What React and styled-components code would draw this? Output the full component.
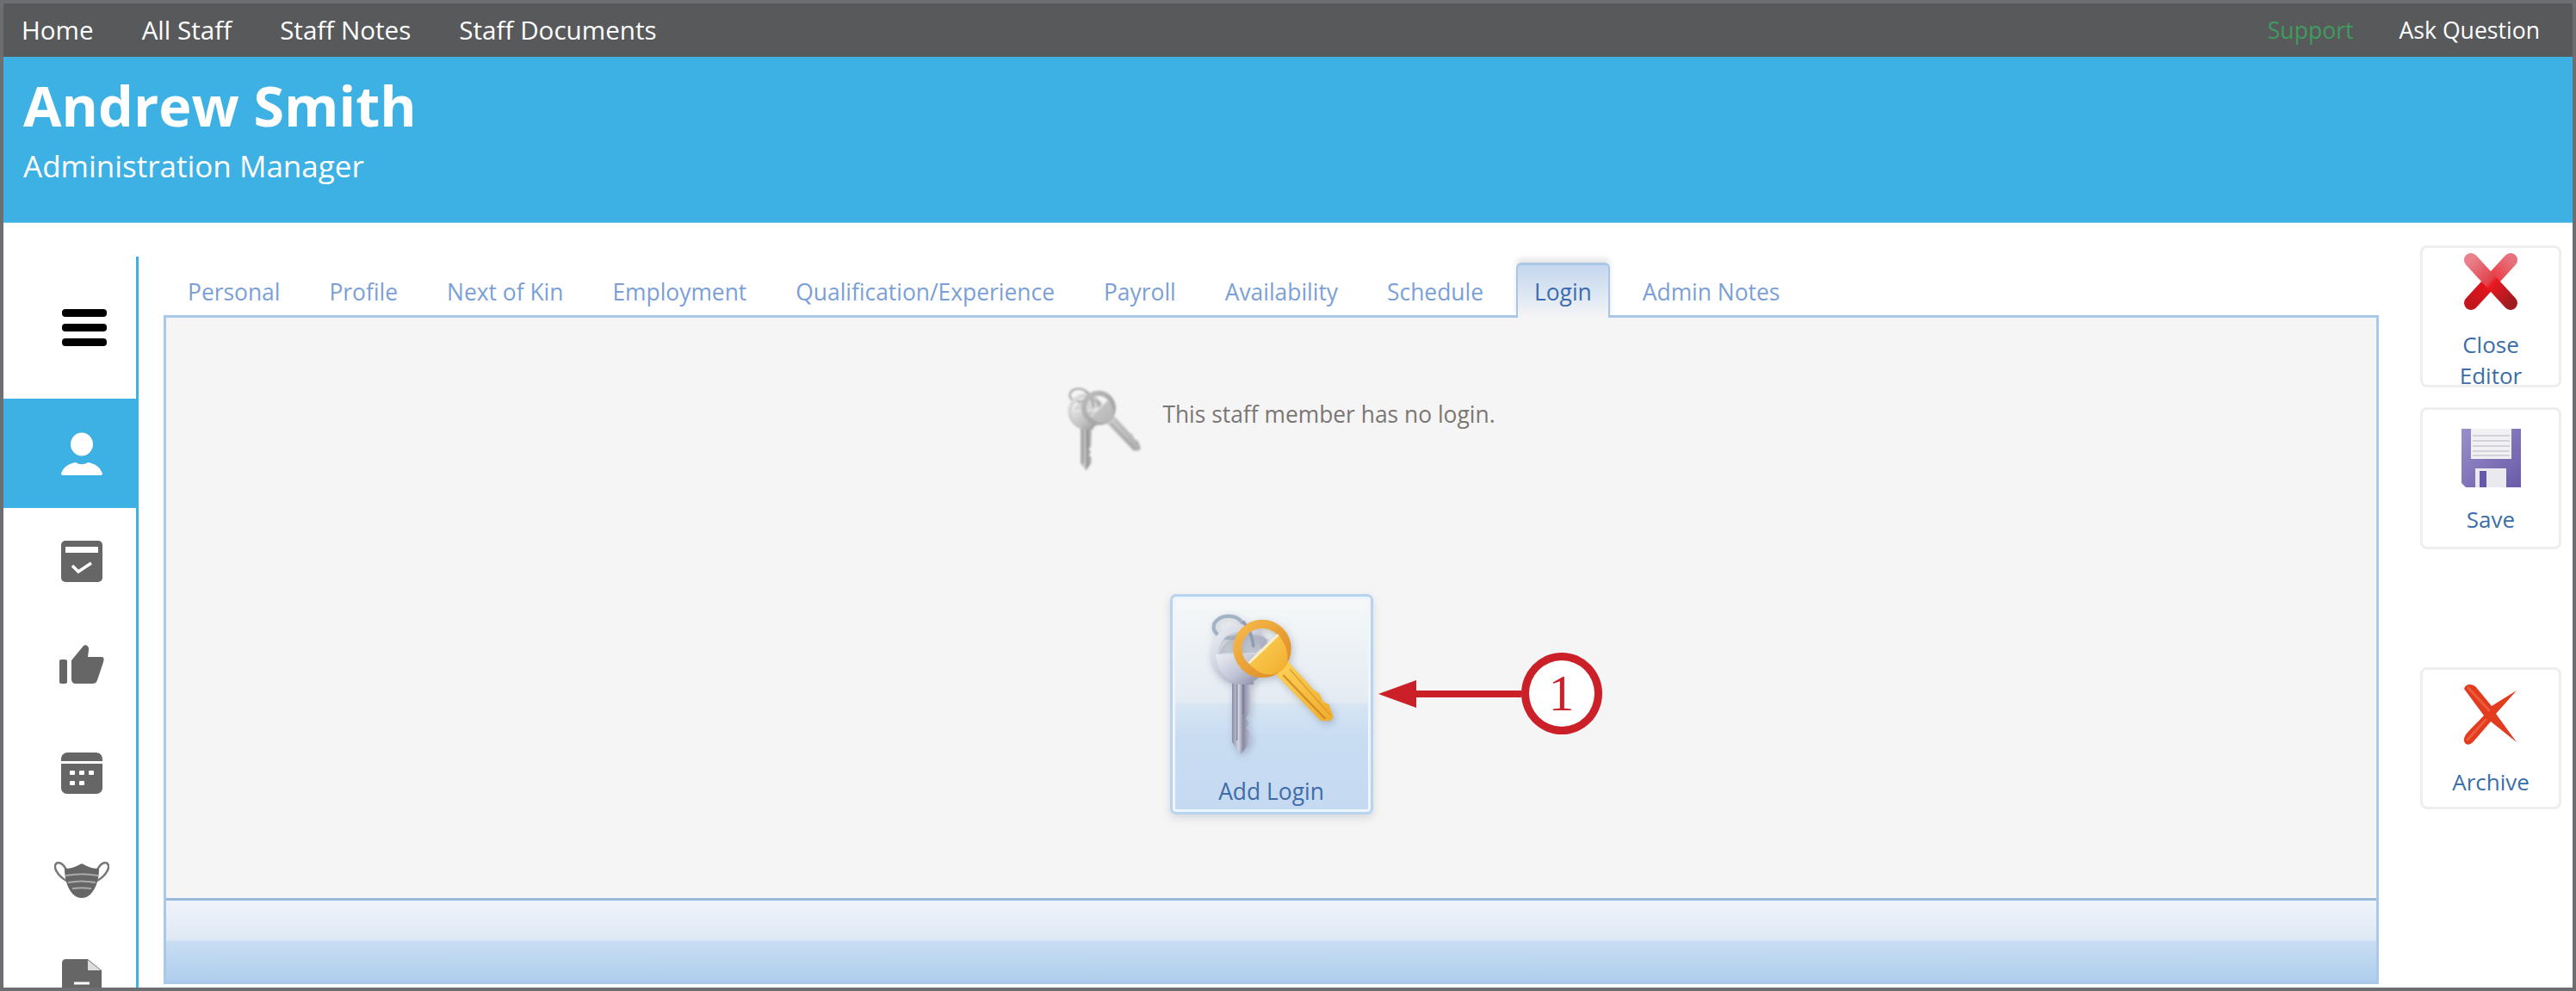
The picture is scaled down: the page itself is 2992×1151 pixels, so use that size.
import styled, { createGlobalStyle } from 'styled-components'

const FONT = `'Open Sans', 'Noto Sans', 'Liberation Sans', sans-serif`

const GlobalStyle = createGlobalStyle`
  html, body {
    margin: 0;
    background: #fff;
    overflow: hidden;
  }
  body {
    font-family: ${FONT};
  }
`

const tabs = [
  'Personal',
  'Profile',
  'Next of Kin',
  'Employment',
  'Qualification/Experience',
  'Payroll',
  'Availability',
  'Schedule',
  'Login',
  'Admin Notes',
]

const GlossyCross = () => (
  <svg width='64' height='68' viewBox='0 0 64 68'>
    <defs>
      <linearGradient id='crossA' x1='0' y1='0' x2='1' y2='1'>
        <stop offset='0' stopColor='#e9808a' />
        <stop offset='0.48' stopColor='#e2424b' />
        <stop offset='0.55' stopColor='#ea1820' />
        <stop offset='1' stopColor='#a01b20' />
      </linearGradient>
      <linearGradient id='crossB' x1='1' y1='0' x2='0' y2='1'>
        <stop offset='0' stopColor='#e5727c' />
        <stop offset='0.45' stopColor='#ec3a42' />
        <stop offset='0.6' stopColor='#e5141c' />
        <stop offset='1' stopColor='#c2161c' />
      </linearGradient>
    </defs>
    <path d='M9 59 L55 9' stroke='url(#crossB)' strokeWidth='16' strokeLinecap='round' />
    <path d='M9 9 L55 59' stroke='url(#crossA)' strokeWidth='16' strokeLinecap='round' />
  </svg>
)

const ThinCross = () => (
  <svg width='64' height='72' viewBox='0 0 64 72'>
    <path d='M1 6 C3 0 9 0 14 3 L33 26 L62 8 L38 35 L62 68 L32 44 L13 66 C8 73 0 72 1 64 C2 58 10 52 24 37 Z' fill='#e23b1d' />
    <path d='M6 5 L30 31 M5 65 L26 42' stroke='#f0694a' strokeWidth='3' strokeLinecap='round' opacity='0.7' />
  </svg>
)

const Floppy = () => (
  <svg width='69' height='70' viewBox='0 0 69 70'>
    <defs>
      <linearGradient id='floppy' x1='0' y1='0' x2='1' y2='1'>
        <stop offset='0' stopColor='#9a8fcb' />
        <stop offset='1' stopColor='#6a5aa8' />
      </linearGradient>
    </defs>
    <path d='M0 1 H69 V69 H5 L0 64 Z' fill='url(#floppy)' />
    <rect x='11' y='1' width='47' height='35' fill='#f1f1f3' />
    <path d='M13 9 H56 M13 15 H56 M13 21 H56 M13 27 H56 M13 32 H56' stroke='#c9c9d3' strokeWidth='1.5' />
    <rect x='16' y='47' width='36' height='22' fill='#e9e9ee' />
    <rect x='21' y='50' width='8' height='19' fill='#6558a6' />
  </svg>
)

const Keys = () => (
  <svg width='100%' height='100%' viewBox='210 90 450 510'>
    <defs>
      <linearGradient id='silverHead' x1='0' y1='0' x2='1' y2='1'>
        <stop offset='0' stopColor='#eceef3' />
        <stop offset='0.6' stopColor='#bfc2d4' />
        <stop offset='1' stopColor='#8f90a8' />
      </linearGradient>
      <linearGradient id='silverStem' x1='0' y1='0' x2='1' y2='0'>
        <stop offset='0' stopColor='#8a8ca6' />
        <stop offset='0.35' stopColor='#d4d6e2' />
        <stop offset='0.6' stopColor='#8688a2' />
        <stop offset='1' stopColor='#c3c5d6' />
      </linearGradient>
      <linearGradient id='goldRing' x1='0' y1='0' x2='1' y2='1'>
        <stop offset='0' stopColor='#f6b94a' />
        <stop offset='1' stopColor='#de8a24' />
      </linearGradient>
      <linearGradient id='goldBlade' x1='0' y1='0' x2='1' y2='1'>
        <stop offset='0' stopColor='#fcd45c' />
        <stop offset='1' stopColor='#f0ac2c' />
      </linearGradient>
    </defs>
    <ellipse cx='285' cy='145' rx='52' ry='38' fill='none' stroke='#a3b3c6' strokeWidth='13' />
    <path d='M297 325 L297 545 L328 588 L360 545 L360 510 L345 497 L358 480 L345 462 L358 445 L362 345 Z' fill='url(#silverStem)' />
    <path d='M314 340 V540 M336 340 V450' stroke='#74768f' strokeWidth='5' opacity='0.7' />
    <ellipse cx='325' cy='240' rx='90' ry='92' fill='none' stroke='url(#silverHead)' strokeWidth='26' />
    <path d='M240 240 C250 325 310 352 372 345 L378 240 Z' fill='url(#silverHead)' />
    <path d='M320 175 C345 165 385 165 425 190 L380 235 H255 C262 205 290 185 320 175 Z' fill='#8b93a6' opacity='0.35' />
    <path d='M335 125 C358 150 368 175 372 215' fill='none' stroke='#8f9db2' strokeWidth='11' />
    <path d='M445 306 L490 262 L515 290 L560 338 L580 362 L600 375 L615 405 L635 415 L650 458 L640 472 L606 472 Z' fill='url(#goldBlade)' />
    <path d='M475 312 L622 465' stroke='#c9821f' strokeWidth='7' opacity='0.8' />
    <path d='M498 292 L640 452' stroke='#d9952a' strokeWidth='5' opacity='0.7' />
    <circle cx='402' cy='220' r='86' fill='none' stroke='url(#goldRing)' strokeWidth='30' />
    <path d='M356 270 L458 172 C486 205 500 250 484 282 C450 322 396 322 356 270 Z' fill='url(#goldBlade)' />
    <path d='M356 270 L458 172' stroke='#fff2c8' strokeWidth='8' />
  </svg>
)

const PersonIcon = () => (
  <svg width='48' height='50' viewBox='0 0 48 50' fill='#fff'>
    <ellipse cx='24' cy='14' rx='13' ry='13.5' />
    <path d='M0 48 C3 39 11 36 17 35 C21 38 27 38 31 35 C37 36 45 39 48 48 C48 50 46 50 44 50 H4 C2 50 0 50 0 48 Z' />
  </svg>
)

const CheckCalendarIcon = () => (
  <svg width='48' height='48' viewBox='0 0 48 48'>
    <rect width='48' height='48' rx='5' fill='#666' />
    <rect x='5' y='7' width='38' height='7' fill='#fff' />
    <path d='M13 29 L20 36 L35 26' fill='none' stroke='#fff' strokeWidth='3.5' />
  </svg>
)

const ThumbIcon = () => (
  <svg width='52' height='46' viewBox='0 0 52 46' fill='#666'>
    <rect y='17' width='9' height='28' rx='2' />
    <path d='M14 18 L28 1 C31 -1 35 2 34 6 L33 14 H49 C52 14 52 17 51 20 L44 41 C43 44 41 45 38 45 H19 C16 45 14 43 14 40 Z' />
  </svg>
)

const CalendarIcon = () => (
  <svg width='48' height='48' viewBox='0 0 48 48'>
    <path d='M0 8 C0 3 3 0 8 0 H40 C45 0 48 3 48 8 V10 H0 Z M0 13 H48 V41 C48 45 45 48 41 48 H7 C3 48 0 45 0 41 Z' fill='#666' />
    <g fill='#fff'>
      <rect x='10' y='21' width='6' height='5' rx='1' />
      <rect x='21' y='21' width='6' height='5' rx='1' />
      <rect x='32' y='21' width='6' height='5' rx='1' />
      <rect x='10' y='33' width='6' height='5' rx='1' />
      <rect x='21' y='33' width='6' height='5' rx='1' />
    </g>
  </svg>
)

const MaskIcon = () => (
  <svg width='64' height='44' viewBox='0 0 64 44'>
    <path d='M14 11 C9 2 3 1 1 6 C0 12 7 20 14 24 M50 11 C55 2 61 1 63 6 C64 12 57 20 50 24' fill='none' stroke='#777' strokeWidth='2.5' />
    <path d='M12 10 C20 10 26 7 32 4 C38 7 44 10 52 10 C52 28 44 44 32 44 C20 44 12 28 12 10 Z' fill='#666' />
    <path d='M13 18 C24 16 40 16 51 18 M16 26 C26 24 38 24 48 26 M21 33 C28 32 36 32 43 33' fill='none' stroke='#aaa' strokeWidth='2' />
  </svg>
)

const FileIcon = () => (
  <svg width='46' height='60' viewBox='0 0 46 60'>
    <path d='M4 0 H30 L46 13 V56 C46 58 44 60 42 60 H4 C2 60 0 58 0 56 V4 C0 2 2 0 4 0 Z' fill='#666' />
    <path d='M30 1 V13 H45 Z' fill='#ddd' />
    <path d='M14 28 H32' stroke='#fff' strokeWidth='3' />
  </svg>
)

const App = () => {
  return (
    <>
      <GlobalStyle />
      <Frame>
        <TopBar>
          <NavGroup>
            <NavLink>Home</NavLink>
            <NavLink>All Staff</NavLink>
            <NavLink>Staff Notes</NavLink>
            <NavLink>Staff Documents</NavLink>
          </NavGroup>
          <HelpGroup>
            <HelpLink $green>Support</HelpLink>
            <HelpLink>Ask Question</HelpLink>
          </HelpGroup>
        </TopBar>

        <Header>
          <Name>Andrew Smith</Name>
          <Role>Administration Manager</Role>
        </Header>

        <Main>
          <Sidebar>
            <MenuButton>
              <MenuBars>
                <span />
                <span />
                <span />
              </MenuBars>
            </MenuButton>
            <SideItem $active>
              <PersonIcon />
            </SideItem>
            <SideItem>
              <CheckCalendarIcon />
            </SideItem>
            <SideItem $raised>
              <ThumbIcon />
            </SideItem>
            <SideItem>
              <CalendarIcon />
            </SideItem>
            <SideItem>
              <MaskIcon />
            </SideItem>
            <SideItem>
              <FileIcon />
            </SideItem>
          </Sidebar>

          <Content>
            <TabStrip>
              {tabs.map((tab) => (
                <Tab key={tab} $active={tab === 'Login'}>
                  {tab}
                </Tab>
              ))}
            </TabStrip>
            <Panel>
              <PanelBody>
                <Notice>
                  <GreyKeys>
                    <Keys />
                  </GreyKeys>
                  <NoticeText>This staff member has no login.</NoticeText>
                </Notice>
                <AddLogin>
                  <BigKeys>
                    <Keys />
                  </BigKeys>
                  <AddLabel>Add Login</AddLabel>
                  <Callout>
                    <ArrowHead />
                    <ArrowLine />
                    <Badge>1</Badge>
                  </Callout>
                </AddLogin>
              </PanelBody>
              <PanelFooter />
            </Panel>
          </Content>

          <Rail>
            <RailButton $pad={5} $gap={21}>
              <GlossyCross />
              <RailLabel>
                Close
                <br />
                Editor
              </RailLabel>
            </RailButton>
            <RailButton $pad={21} $gap={18}>
              <Floppy />
              <RailLabel>Save</RailLabel>
            </RailButton>
            <RailButton $pad={16} $gap={24} $push>
              <ThinCross />
              <RailLabel>Archive</RailLabel>
            </RailButton>
          </Rail>
        </Main>
      </Frame>
    </>
  )
}

const Frame = styled.div`
  box-sizing: border-box;
  width: 2992px;
  height: 1151px;
  border: 4px solid #6d6e71;
  display: flex;
  flex-direction: column;
  overflow: hidden;
  background: #fff;
`

const TopBar = styled.nav`
  flex: none;
  height: 62px;
  background: #58595b;
  display: flex;
  align-items: center;
  justify-content: space-between;
  padding: 0 38px 0 21px;
`

const NavGroup = styled.div`
  display: flex;
  gap: 56px;
`

const NavLink = styled.span`
  color: #fff;
  font-size: 29.6px;
  line-height: 38px;
`

const HelpGroup = styled.div`
  display: flex;
  gap: 53px;
`

const HelpLink = styled.span`
  color: ${(p) => (p.$green ? '#3f9b5e' : '#fff')};
  font-size: 26.6px;
  line-height: 38px;
`

const Header = styled.header`
  flex: none;
  box-sizing: border-box;
  height: 193px;
  background: #3eb1e4;
  border-bottom: 1px solid #7cc9ec;
  padding: 14px 0 0 23px;
  color: #fff;
`

const Name = styled.h1`
  margin: 0;
  font-size: 64.6px;
  line-height: 84px;
  font-weight: 700;
`

const Role = styled.div`
  margin-top: 6px;
  font-size: 35px;
  line-height: 46px;
`

const Main = styled.main`
  flex: 1;
  min-height: 0;
  display: flex;
`

const Sidebar = styled.aside`
  flex: none;
  box-sizing: border-box;
  width: 157px;
  margin-top: 39px;
  border-right: 3px solid #3eb1e4;
  overflow: hidden;
`

const MenuButton = styled.div`
  height: 165px;
  display: flex;
  align-items: center;
  justify-content: center;
  padding-left: 34px;
`

const MenuBars = styled.div`
  width: 52px;
  display: flex;
  flex-direction: column;
  gap: 8px;

  span {
    height: 9px;
    border-radius: 4px;
    background: #000;
  }
`

const SideItem = styled.div`
  box-sizing: border-box;
  height: ${(p) => (p.$active ? '127px' : '123px')};
  display: flex;
  align-items: center;
  justify-content: center;
  padding: 0 0 ${(p) => (p.$raised ? '6px' : '0')} 28px;
  background: ${(p) => (p.$active ? '#3eb1e4' : 'transparent')};
`

const Content = styled.section`
  flex: 1;
  min-width: 0;
  display: flex;
  flex-direction: column;
  margin-left: 29px;
  padding: 41px 0 4px;
`

const TabStrip = styled.div`
  flex: none;
  height: 66px;
  display: flex;
  align-items: flex-end;
  gap: 19px;
  padding-left: 9px;
`

const Tab = styled.div`
  position: relative;
  z-index: 1;
  box-sizing: border-box;
  padding: ${(p) => (p.$active ? '13px 19px 12px' : '0 19px 9px')};
  margin-bottom: ${(p) => (p.$active ? '-3px' : '0')};
  font-size: 26.4px;
  line-height: 36px;
  color: ${(p) => (p.$active ? '#3c6cb0' : '#7b9fd6')};
  ${(p) =>
    p.$active &&
    `
    background: linear-gradient(#c4d7ee, #dde7f3 55%, #f5f5f5);
    border: solid #a9c6e6;
    border-width: 3px 2px 0;
    border-radius: 6px 6px 0 0;
    box-shadow: 0 -5px 6px rgba(120, 120, 120, 0.18);
  `}
`

const Panel = styled.div`
  flex: 1;
  min-height: 0;
  display: flex;
  flex-direction: column;
  background: #f5f5f5;
  border: 3px solid #a9c9eb;
`

const PanelBody = styled.div`
  flex: 1;
  min-height: 0;
  display: flex;
  flex-direction: column;
  align-items: center;
  padding-top: 78px;
`

const Notice = styled.div`
  height: 103px;
  display: flex;
  align-items: flex-start;
  gap: 23px;
  margin-left: 22px;
`

const GreyKeys = styled.div`
  width: 89px;
  height: 103px;
  filter: grayscale(1) blur(0.8px) contrast(0.7) brightness(1.1);
`

const NoticeText = styled.div`
  margin-top: 16px;
  font-size: 26.4px;
  line-height: 36px;
  color: #7b7673;
`

const AddLogin = styled.div`
  position: relative;
  box-sizing: border-box;
  width: 236px;
  height: 256px;
  margin-top: 140px;
  display: flex;
  flex-direction: column;
  align-items: center;
  border: 3px solid #b7d3ef;
  border-radius: 7px;
  box-shadow: inset 0 0 0 3px #eef5fc, 0 4px 10px rgba(120, 130, 140, 0.25);
  background: linear-gradient(#f6f8f8 0, #e4ebf3 49%, #d7e5f3 50%, #c8dcf2 66%, #c5daf1 100%);
`

const BigKeys = styled.div`
  width: 150px;
  height: 170px;
  margin-top: 17px;
  filter: drop-shadow(2px 3px 4px rgba(70, 80, 100, 0.3));
`

const AddLabel = styled.div`
  margin-top: 21px;
  font-size: 26.4px;
  line-height: 36px;
  color: #3f6ca8;
`

const Callout = styled.div`
  position: absolute;
  left: 239px;
  top: 65px;
  display: flex;
  align-items: center;
`

const ArrowHead = styled.div`
  width: 0;
  height: 0;
  border-style: solid;
  border-width: 16px 44px 16px 0;
  border-color: transparent #cb2027 transparent transparent;
`

const ArrowLine = styled.div`
  width: 122px;
  height: 8px;
  background: #cb2027;
`

const Badge = styled.div`
  box-sizing: border-box;
  width: 94px;
  height: 95px;
  border: 9px solid #cb2027;
  border-radius: 50%;
  background: #fff;
  color: #cb2027;
  font-family: 'Liberation Serif', serif;
  font-size: 60px;
  line-height: 76px;
  text-align: center;
`

const PanelFooter = styled.div`
  flex: none;
  height: 97px;
  box-sizing: border-box;
  border-top: 3px solid #9abadd;
  background: linear-gradient(#eff3fb 0, #dee9f5 49%, #c9def3 50%, #aecdec 100%);
`

const Rail = styled.div`
  flex: none;
  box-sizing: border-box;
  width: 225px;
  padding: 26px 13px 0 48px;
  display: flex;
  flex-direction: column;
  gap: 23px;
`

const RailButton = styled.div`
  box-sizing: border-box;
  width: 164px;
  height: 165px;
  flex: none;
  display: flex;
  flex-direction: column;
  align-items: center;
  gap: ${(p) => p.$gap}px;
  padding: ${(p) => p.$pad}px 0 0;
  margin: ${(p) => (p.$push ? '114px 0 0' : '0')};
  background: #fff;
  border: 3px solid #eeeeee;
  border-radius: 8px;
  font-family: ${FONT};

  svg {
    flex: none;
  }
`

const RailLabel = styled.div`
  font-size: 26px;
  line-height: 36px;
  color: #3a6ea8;
  text-align: center;
`

export default App
